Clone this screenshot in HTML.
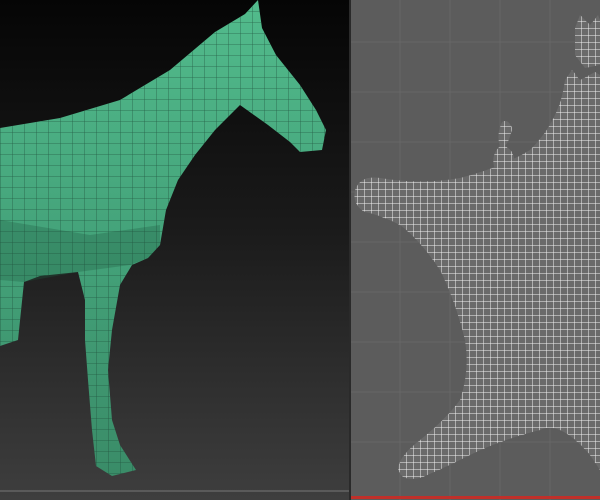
<!DOCTYPE html><html><head><style>html,body{margin:0;padding:0;width:600px;height:500px;overflow:hidden;background:#5c5c5c}</style></head><body>
<svg width="600" height="500" viewBox="0 0 600 500" xmlns="http://www.w3.org/2000/svg">
<defs>
<linearGradient id="bg" x1="0" y1="0" x2="0" y2="1"><stop offset="0" stop-color="#050505"/><stop offset="0.45" stop-color="#1a1a1a"/><stop offset="1" stop-color="#3e3e3e"/></linearGradient>
<linearGradient id="gr" x1="0" y1="0" x2="0" y2="1"><stop offset="0" stop-color="#52bb8c"/><stop offset="0.5" stop-color="#44a37a"/><stop offset="1" stop-color="#3a8c68"/></linearGradient>
<pattern id="hm" width="12" height="11" patternUnits="userSpaceOnUse"><path d="M0 0H12M0 0V11" stroke="#1c4a36" stroke-width="0.8" opacity="0.8"/></pattern>
<pattern id="uv" width="7" height="7" patternUnits="userSpaceOnUse"><rect width="7" height="7" fill="#6a6a6a"/><path d="M0 0H7M0 0V7" stroke="#f2f2f2" stroke-width="1"/></pattern>
</defs>
<rect x="0" y="0" width="349" height="500" fill="url(#bg)"/>
<rect x="0" y="490" width="349" height="2" fill="#5a5a5a"/>
<rect x="349" y="0" width="2" height="500" fill="#2a2a2a"/>
<rect x="351" y="0" width="249" height="500" fill="#5c5c5c"/>
<g stroke="#666" stroke-width="1"><line x1="400" y1="0" x2="400" y2="500"/><line x1="450" y1="0" x2="450" y2="500"/><line x1="500" y1="0" x2="500" y2="500"/><line x1="550" y1="0" x2="550" y2="500"/><line x1="351" y1="42" x2="600" y2="42"/><line x1="351" y1="92" x2="600" y2="92"/><line x1="351" y1="142" x2="600" y2="142"/><line x1="351" y1="192" x2="600" y2="192"/><line x1="351" y1="242" x2="600" y2="242"/><line x1="351" y1="292" x2="600" y2="292"/><line x1="351" y1="342" x2="600" y2="342"/><line x1="351" y1="392" x2="600" y2="392"/><line x1="351" y1="442" x2="600" y2="442"/></g>
<rect x="351" y="496" width="249" height="3" fill="#c0302a"/>
<g>
<path d="M0 128 L60 118 L120 100 L170 70 L215 32 L245 14 L258 0 L262 28 L276 55 L300 85 L316 110 L326 130 L322 150 L300 152 L290 142 L268 125 L240 105 L215 130 L195 155 L178 180 L166 210 L160 245 L148 258 L132 265 L120 285 L112 330 L108 370 L112 420 L120 445 L136 470 L112 476 L96 466 L92 430 L88 380 L85 340 L85 300 L78 272 L40 276 L24 282 L18 340 L0 346 Z" fill="url(#gr)"/>
<path d="M0 220 L90 235 L160 225 L160 245 L148 258 L130 265 L78 272 L24 282 L0 280Z" fill="#1d5a40" opacity="0.3"/>
<path d="M0 128 L60 118 L120 100 L170 70 L215 32 L245 14 L258 0 L262 28 L276 55 L300 85 L316 110 L326 130 L322 150 L300 152 L290 142 L268 125 L240 105 L215 130 L195 155 L178 180 L166 210 L160 245 L148 258 L132 265 L120 285 L112 330 L108 370 L112 420 L120 445 L136 470 L112 476 L96 466 L92 430 L88 380 L85 340 L85 300 L78 272 L40 276 L24 282 L18 340 L0 346 Z" fill="url(#hm)"/>
</g>
<path d="M355 190 Q360 175 380 178 Q420 185 460 178 Q500 168 530 150 Q560 120 565 80 L572 70 L580 80 L595 72 L600 75 L600 470 L590 455 Q560 420 540 430 Q500 440 470 455 Q440 470 420 478 Q400 482 398 468 Q400 455 420 440 Q445 420 460 400 Q470 370 465 340 Q455 300 440 270 Q420 240 400 225 Q380 215 365 212 Q352 205 355 190Z" fill="url(#uv)"/>
<path d="M575 28 L580 15 L590 25 L598 15 L600 20 L600 65 L585 68 L575 55Z" fill="url(#uv)"/>
<path d="M502 122 Q508 118 512 128 Q510 140 505 146 Q516 152 514 165 Q505 178 495 170 Q490 155 500 146 Q496 135 502 122Z" fill="url(#uv)"/>
</svg>
</body></html>
